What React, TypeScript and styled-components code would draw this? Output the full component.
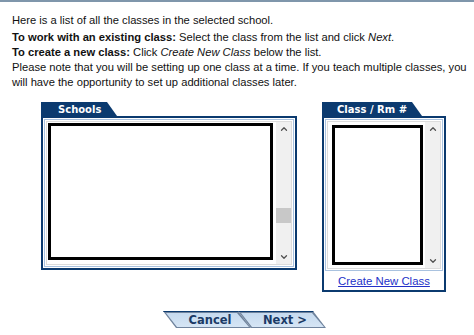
import { FC } from 'react';
import styled, { createGlobalStyle } from 'styled-components';
import { ChevronUp, ChevronDown } from 'lucide-react';

const NAVY = '#0b3a6f';
const PALE = '#a9c2df';

const GlobalStyle = createGlobalStyle`
  body {
    margin: 0;
    background: #ffffff;
    font-family: 'Liberation Sans', Arial, sans-serif;
    color: #111;
  }
`;

type ListProps = {
  fieldWidth: number;
  fieldHeight: number;
  fieldMargin: string;
  thumbTop?: number;
};

const ListBoxView: FC<ListProps> = ({ fieldWidth, fieldHeight, fieldMargin, thumbTop }) => (
  <ListBox>
    <Field $w={fieldWidth} $h={fieldHeight} $m={fieldMargin} />
    <Track>
      <Arrow>
        <ChevronUp size={10} strokeWidth={3} />
      </Arrow>
      {thumbTop !== undefined && <Thumb $top={thumbTop} />}
      <Arrow $bottom>
        <ChevronDown size={10} strokeWidth={3} />
      </Arrow>
    </Track>
  </ListBox>
);

export default function App() {
  return (
    <>
      <GlobalStyle />
      <TopBar />
      <Intro>
        <Lead>Here is a list of all the classes in the selected school.</Lead>
        <Para>
          <b>To work with an existing class:</b> Select the class from the list and click <i>Next</i>.
        </Para>
        <Para>
          <b>To create a new class:</b> Click <i>Create New Class</i> below the list.
        </Para>
        <Para>
          Please note that you will be setting up one class at a time. If you teach multiple classes, you
          will have the opportunity to set up additional classes later.
        </Para>
      </Intro>

      <Panels>
        <Column $w={256}>
          <Tab $w={76} $pad={17}>Schools</Tab>
          <Frame>
            <Inner>
              <ListBoxView fieldWidth={225} fieldHeight={137} fieldMargin='1px 3px 4px 1px' thumbTop={72} />
            </Inner>
          </Frame>
        </Column>

        <Column $w={124}>
          <Tab $w={100} $pad={15}>Class / Rm #</Tab>
          <Frame>
            <Inner>
              <ListBoxView fieldWidth={91} fieldHeight={140} fieldMargin='3px 2px 3px 4px' />
            </Inner>
            <LinkRow>
              <CreateLink href='#'>Create New Class</CreateLink>
            </LinkRow>
          </Frame>
        </Column>
      </Panels>

      <Buttons>
        <NavButton type='button'>
          <span>Cancel</span>
        </NavButton>
        <NavButton type='button' $overlap>
          <span>Next &gt;</span>
        </NavButton>
      </Buttons>
    </>
  );
}

const TopBar = styled.div`
  height: 2px;
  background: #7f96ab;
`;

const Intro = styled.div`
  padding: 11px 0 0 12px;
  font-size: 11.2px;
  line-height: 15px;
`;

const Para = styled.p`
  margin: 0;
`;

const Lead = styled(Para)`
  margin-bottom: 2px;
`;

const Panels = styled.div`
  display: flex;
  align-items: flex-start;
  gap: 25px;
  margin-top: 12px;
  padding-left: 41px;
`;

const Column = styled.div<{ $w: number }>`
  display: flex;
  flex-direction: column;
  width: ${(p) => p.$w}px;
`;

const Tab = styled.div<{ $w: number; $pad: number }>`
  width: ${(p) => p.$w}px;
  height: 14px;
  box-sizing: border-box;
  padding-left: ${(p) => p.$pad}px;
  background: ${NAVY};
  color: #fff;
  font-family: 'DejaVu Sans', Verdana, sans-serif;
  font-weight: bold;
  font-size: 10px;
  line-height: 15px;
  white-space: nowrap;
  clip-path: polygon(0 0, calc(100% - 10px) 0, 100% 100%, 0 100%);
`;

const Frame = styled.div`
  border: 2px solid ${NAVY};
  padding: 1px;
  background: #fff;
`;

const Inner = styled.div`
  border: 1px solid ${PALE};
  padding: 1px;
`;

const ListBox = styled.div`
  display: flex;
  border: 1px solid #dcdcdc;
  background: #fff;
`;

const Field = styled.div<{ $w: number; $h: number; $m: string }>`
  box-sizing: border-box;
  width: ${(p) => p.$w}px;
  height: ${(p) => p.$h}px;
  margin: ${(p) => p.$m};
  border: 3px solid #000;
  background: #fff;
`;

const Track = styled.div`
  display: flex;
  flex-direction: column;
  width: 15px;
  margin-left: auto;
  background: #f0f0f0;
`;

const Arrow = styled.div<{ $bottom?: boolean }>`
  display: flex;
  align-items: center;
  justify-content: center;
  height: 14px;
  color: #505050;
  margin-top: ${(p) => (p.$bottom ? 'auto' : '0')};
`;

const Thumb = styled.div<{ $top: number }>`
  height: 15px;
  margin-top: ${(p) => p.$top}px;
  background: #c8c8c8;
`;

const LinkRow = styled.div`
  display: flex;
  align-items: center;
  justify-content: center;
  height: 17px;
  padding-top: 1px;
`;

const CreateLink = styled.a`
  color: #2331c8;
  font-size: 11.4px;
  text-decoration: underline;
`;

const Buttons = styled.div`
  display: flex;
  margin-top: 19px;
  padding-left: 163px;
`;

const NavButton = styled.button<{ $overlap?: boolean }>`
  position: relative;
  width: 88px;
  height: 17px;
  margin-left: ${(p) => (p.$overlap ? '-13px' : '0')};
  padding: 0 0 0 6px;
  border: none;
  background: #6f839d;
  clip-path: polygon(0 0, 75px 0, 88px 17px, 13px 17px);
  cursor: pointer;

  &::before {
    content: '';
    position: absolute;
    inset: 0;
    background: linear-gradient(#c3d8ee, #d7e6f5);
    clip-path: polygon(3px 2px, 74px 2px, 86px 16px, 14px 16px);
  }

  &::after {
    content: '';
    position: absolute;
    left: 0;
    right: 0;
    top: 0;
    height: 1px;
    background: ${NAVY};
  }

  span {
    position: relative;
    font-family: 'DejaVu Sans', Verdana, sans-serif;
    font-weight: bold;
    font-size: 11.5px;
    color: #1b3a66;
  }
`;
